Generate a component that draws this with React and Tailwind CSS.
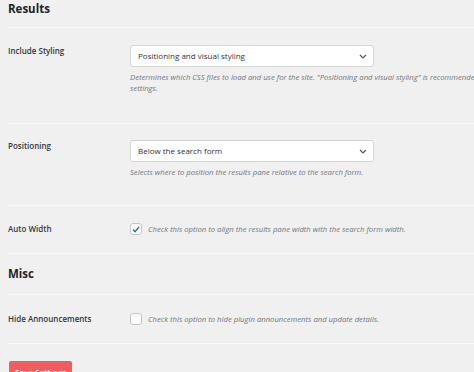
import { useState } from 'react';

const Chevron = () => (
  <svg width="8" height="5" viewBox="0 0 8 5" fill="none" className="shrink-0">
    <path d="M1 1l3 3 3-3" stroke="#50575e" strokeWidth="1.2" />
  </svg>
);

const Select = ({ value }) => (
  <div className="w-[244px] h-[22px] flex items-center justify-between pl-[7px] pr-[6px] bg-white border border-[#d6d6d6] rounded-[3px] text-[8px] text-[#2c3338]">
    <span>{value}</span>
    <Chevron />
  </div>
);

const Checkbox = ({ checked, onChange }) => (
  <button
    type="button"
    onClick={onChange}
    className="w-[12px] h-[12px] shrink-0 flex items-center justify-center bg-white border border-[#c3c4c7] rounded-[3px]"
  >
    {checked && (
      <svg width="8" height="7" viewBox="0 0 8 7" fill="none">
        <path d="M1 3.6l2 2L7 1" stroke="#2271b1" strokeWidth="1.4" />
      </svg>
    )}
  </button>
);

const Label = ({ children }) => (
  <div className="w-[122px] shrink-0 text-[8px] leading-[12px] font-semibold text-[#32373c]">
    {children}
  </div>
);

const Desc = ({ children, className = '' }) => (
  <p className={`text-[7.7px] leading-[11px] italic text-[#72777c] ${className}`}>{children}</p>
);

const App = () => {
  const [autoWidth, setAutoWidth] = useState(true);
  const [hideAnn, setHideAnn] = useState(false);

  return (
    <div
      className="w-[474px] h-[372px] overflow-hidden bg-[#f0f0f0]"
      style={{ fontFamily: '"Open Sans", "Noto Sans", sans-serif' }}
    >
      <div className="w-[600px] pl-2">
        <div className="h-[28px] border-b border-[#f9f9f9]">
          <h2 className="text-[11.5px] leading-[18px] font-bold text-[#1d2327]">Results</h2>
        </div>

        {/* Include styling */}
        <div className="flex pt-[17px] pb-[29px] border-b border-[#f9f9f9]">
          <Label>Include Styling</Label>
          <div>
            <Select value="Positioning and visual styling" />
            <Desc className="mt-[5px] w-[392px]">
              Determines which CSS files to load and use for the site. "Positioning and visual styling" is recommended for most
              settings.
            </Desc>
          </div>
        </div>

        {/* Positioning */}
        <div className="flex pt-[16px] pb-[27px] border-b border-[#f9f9f9]">
          <Label>Positioning</Label>
          <div>
            <Select value="Below the search form" />
            <Desc className="mt-[5px]">Selects where to position the results pane relative to the search form.</Desc>
          </div>
        </div>

        {/* Auto width */}
        <div className="flex items-center pt-[17px] pb-[18px] border-b border-[#f9f9f9]">
          <Label>Auto Width</Label>
          <div className="flex items-center gap-[6px]">
            <Checkbox checked={autoWidth} onChange={() => setAutoWidth(!autoWidth)} />
            <Desc>Check this option to align the results pane width with the search form width.</Desc>
          </div>
        </div>

        <div className="h-[41px] pt-[11px] border-b border-[#f9f9f9]">
          <h2 className="text-[11.5px] leading-[18px] font-bold text-[#1d2327]">Misc</h2>
        </div>

        {/* Hide announcements */}
        <div className="flex items-center pt-[18px] pb-[18px] border-b border-[#f9f9f9]">
          <Label>Hide Announcements</Label>
          <div className="flex items-center gap-[6px]">
            <Checkbox checked={hideAnn} onChange={() => setHideAnn(!hideAnn)} />
            <Desc>Check this option to hide plugin announcements and update details.</Desc>
          </div>
        </div>

        <button
          type="button"
          className="mt-[17px] ml-[1px] w-[63px] h-[24px] bg-[#f25c5c] rounded-[2px] text-white text-[8px] font-semibold"
        >
          Save Settings
        </button>
      </div>
    </div>
  );
};

export default App;
